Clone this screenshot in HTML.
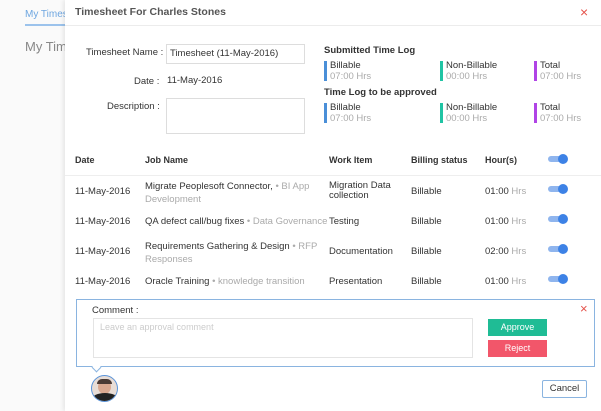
<!DOCTYPE html>
<html><head><meta charset="utf-8"><style>
*{margin:0;padding:0;box-sizing:border-box}
body{width:601px;height:411px;overflow:hidden;background:#fff;font-family:"Liberation Sans",sans-serif;position:relative;color:#333;font-size:9.5px}
.a{position:absolute;white-space:nowrap}
.g{color:#aaa}
.bar{position:absolute;width:3px;height:20px}
.tg{position:absolute;width:20px;height:10px}
.tg:before{content:"";position:absolute;left:0;top:2px;width:16px;height:6px;border-radius:3px;background:#8fb5ee}
.tg:after{content:"";position:absolute;right:0;top:0;width:10px;height:10px;border-radius:50%;background:#3d82e6}
.b{font-weight:bold}
</style></head><body>
<div class="a" style="left:0;top:0;width:66px;height:411px;background:#fafafa"></div>
<div class="a" style="left:25px;top:9px;color:#6ea6e0;font-size:10px">My Times</div>
<div class="a" style="left:25px;top:24px;width:40px;height:2px;background:#9cc3ec"></div>
<div class="a" style="left:25px;top:39px;color:#888;font-size:13px">My Tim</div>
<div class="a" style="left:65px;top:0;width:536px;height:411px;background:#fff;box-shadow:-2px 0 4px rgba(0,0,0,.08)"></div>
<div class="a" style="left:65px;top:25px;width:536px;height:1px;background:#ececec"></div>
<div class="a b" style="left:75px;top:6px;font-size:10.5px;color:#555">Timesheet For Charles Stones</div>
<div class="a" style="left:580px;top:4px;color:#e5534b;font-size:14px">×</div>

<div class="a" style="left:86px;top:47px">Timesheet Name :</div>
<div class="a" style="left:166px;top:44px;width:139px;height:20px;border:1px solid #ddd;padding:3px 3px;font-size:9.5px">Timesheet (11-May-2016)</div>
<div class="a" style="left:134px;top:76px">Date :</div>
<div class="a" style="left:167px;top:75px">11-May-2016</div>
<div class="a" style="left:107px;top:101px">Description :</div>
<div class="a" style="left:166px;top:98px;width:139px;height:36px;border:1px solid #ddd"></div>

<div class="a b" style="left:324px;top:45px">Submitted Time Log</div>
<div class="bar" style="left:324px;top:61px;background:#4a8fd8"></div>
<div class="a" style="left:330px;top:60px">Billable</div><div class="a g" style="left:330px;top:71px">07:00 Hrs</div>
<div class="bar" style="left:440px;top:61px;background:#20c4a4"></div>
<div class="a" style="left:446px;top:60px">Non-Billable</div><div class="a g" style="left:446px;top:71px">00:00 Hrs</div>
<div class="bar" style="left:534px;top:61px;background:#b044e6"></div>
<div class="a" style="left:540px;top:60px">Total</div><div class="a g" style="left:540px;top:71px">07:00 Hrs</div>
<div class="a b" style="left:324px;top:87px">Time Log to be approved</div>
<div class="bar" style="left:324px;top:103px;background:#4a8fd8"></div>
<div class="a" style="left:330px;top:102px">Billable</div><div class="a g" style="left:330px;top:113px">07:00 Hrs</div>
<div class="bar" style="left:440px;top:103px;background:#20c4a4"></div>
<div class="a" style="left:446px;top:102px">Non-Billable</div><div class="a g" style="left:446px;top:113px">00:00 Hrs</div>
<div class="bar" style="left:534px;top:103px;background:#b044e6"></div>
<div class="a" style="left:540px;top:102px">Total</div><div class="a g" style="left:540px;top:113px">07:00 Hrs</div>

<div class="a b" style="left:75px;top:155px;font-size:9px">Date</div>
<div class="a b" style="left:145px;top:155px;font-size:9px">Job Name</div>
<div class="a b" style="left:329px;top:155px;font-size:9px">Work Item</div>
<div class="a b" style="left:411px;top:155px;font-size:9px">Billing status</div>
<div class="a b" style="left:485px;top:155px;font-size:9px">Hour(s)</div>
<div class="tg" style="left:548px;top:154px"></div>
<div class="a" style="left:65px;top:175px;width:536px;height:1px;background:#eee"></div>

<div class="a" style="left:75px;top:186px">11-May-2016</div>
<div class="a" style="left:145px;top:181px">Migrate Peoplesoft Connector, <span class="g">• BI App</span></div>
<div class="a g" style="left:145px;top:194px">Development</div>
<div class="a" style="left:329px;top:181px;line-height:10px">Migration Data<br>collection</div>
<div class="a" style="left:411px;top:186px">Billable</div>
<div class="a" style="left:485px;top:186px">01:00 <span class="g">Hrs</span></div>
<div class="tg" style="left:548px;top:184px"></div>

<div class="a" style="left:75px;top:216px">11-May-2016</div>
<div class="a" style="left:145px;top:216px">QA defect call/bug fixes <span class="g">• Data Governance</span></div>
<div class="a" style="left:329px;top:216px">Testing</div>
<div class="a" style="left:411px;top:216px">Billable</div>
<div class="a" style="left:485px;top:216px">01:00 <span class="g">Hrs</span></div>
<div class="tg" style="left:548px;top:214px"></div>

<div class="a" style="left:75px;top:246px">11-May-2016</div>
<div class="a" style="left:145px;top:241px">Requirements Gathering &amp; Design <span class="g">• RFP</span></div>
<div class="a g" style="left:145px;top:254px">Responses</div>
<div class="a" style="left:329px;top:246px">Documentation</div>
<div class="a" style="left:411px;top:246px">Billable</div>
<div class="a" style="left:485px;top:246px">02:00 <span class="g">Hrs</span></div>
<div class="tg" style="left:548px;top:244px"></div>

<div class="a" style="left:75px;top:276px">11-May-2016</div>
<div class="a" style="left:145px;top:276px">Oracle Training <span class="g">• knowledge transition</span></div>
<div class="a" style="left:329px;top:276px">Presentation</div>
<div class="a" style="left:411px;top:276px">Billable</div>
<div class="a" style="left:485px;top:276px">01:00 <span class="g">Hrs</span></div>
<div class="tg" style="left:548px;top:274px"></div>

<div class="a" style="left:76px;top:299px;width:519px;height:68px;border:1px solid #8ab4e0"></div>
<div class="a" style="left:92px;top:305px">Comment :</div>
<div class="a" style="left:93px;top:318px;width:380px;height:40px;border:1px solid #e4e4e4;padding:3px 6px;color:#ccc;font-size:9px">Leave an approval comment</div>
<div class="a" style="left:488px;top:319px;width:59px;height:17px;background:#1fbc95;color:#fff;text-align:center;line-height:17px;font-size:9px">Approve</div>
<div class="a" style="left:488px;top:340px;width:59px;height:17px;background:#f2566a;color:#fff;text-align:center;line-height:17px;font-size:9px">Reject</div>
<div class="a" style="left:580px;top:301px;color:#e5534b;font-size:13px">×</div>
<div class="a" style="left:93px;top:364px;width:7px;height:7px;background:#fff;border-right:1px solid #8ab4e0;border-bottom:1px solid #8ab4e0;transform:rotate(45deg)"></div>
<div class="a" style="left:91px;top:375px;width:27px;height:27px;border-radius:50%;border:1.5px solid #5a93d8;overflow:hidden;background:#e8ddd6">
 <div class="a" style="left:6px;top:4px;width:13px;height:14px;border-radius:50%;background:#d9a890"></div>
 <div class="a" style="left:5px;top:3px;width:15px;height:5px;border-radius:6px 6px 0 0;background:#4a3a34"></div>
 <div class="a" style="left:0;top:17px;width:26px;height:12px;border-radius:50% 50% 0 0;background:#222"></div>
</div>
<div class="a" style="left:542px;top:380px;width:45px;height:18px;border:1px solid #8ab4e0;border-radius:2px;text-align:center;line-height:16px;font-size:9.5px">Cancel</div>
</body></html>
